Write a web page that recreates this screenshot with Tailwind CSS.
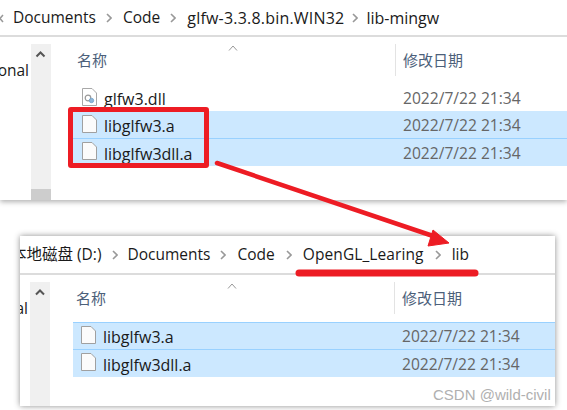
<!DOCTYPE html>
<html lang="en">
<head>
<meta charset="UTF-8">
<title>lib-mingw</title>
<script src="https://cdn.jsdelivr.net/npm/@tailwindcss/browser@4"></script>
</head>
<body class="bg-white overflow-hidden font-['Open_Sans','Noto_Sans_CJK_SC',sans-serif]">
<div class="relative w-[567px] h-[410px] overflow-hidden">

  <!-- top explorer window -->
  <section class="h-[200px] bg-white shadow-[0_2px_5px_rgba(0,0,0,0.3)] overflow-hidden">
    <div class="h-[37px] border-b-2 border-[#dcdcdc] flex items-center text-[15.5px] text-[#1a1a1a] pt-[1px] whitespace-nowrap">
      <svg class="w-[5px] h-[9px] ml-[-1px] mr-[9px]" viewBox="0 0 5 9"><path d="M4 1 1 4.500 4 8" fill="none" stroke="#999" stroke-width="1.500"/></svg>
      <span>Documents</span>
      <svg class="w-[6px] h-[10px] ml-[10px] mr-[11px]" viewBox="0 0 6 10"><path d="M1 1l4 4-4 4" fill="none" stroke="#999" stroke-width="1.600"/></svg>
      <span>Code</span>
      <svg class="w-[6px] h-[10px] ml-[10px] mr-[11px]" viewBox="0 0 6 10"><path d="M1 1l4 4-4 4" fill="none" stroke="#999" stroke-width="1.600"/></svg>
      <span class="text-[16px] tracking-[0.2px]">glfw-3.3.8.bin.WIN32</span>
      <svg class="w-[6px] h-[10px] mx-[8px]" viewBox="0 0 6 10"><path d="M1 1l4 4-4 4" fill="none" stroke="#999" stroke-width="1.600"/></svg>
      <span class="text-[16px]">lib-mingw</span>
    </div>
    <div class="flex h-[163px] pt-[7px]">
      <div class="w-[31px] shrink-0 text-[15.5px] text-[#1a1a1a] pt-[15px] overflow-hidden whitespace-nowrap flex justify-end pr-[2px]"><span>onal</span></div>
      <div class="w-[20px] shrink-0 h-[156px] bg-[#f0f0f0] flex flex-col justify-between">
        <svg class="w-[19px] h-[20px]" viewBox="0 0 19 20"><path d="M5.500 12.500 9.500 8.500l4 4" fill="none" stroke="#555" stroke-width="2"/></svg>
        <div class="h-[11px] bg-[#cdcdcd]"></div>
      </div>
      <div class="flex-1 pl-[22px] min-w-0">
        <div class="relative h-[41px] flex text-[15px] text-[#4c607a]">
          <svg class="absolute left-[155px] top-[1px] w-[10px] h-[6px]" viewBox="0 0 10 6"><path d="M1 5.500 5 1l4 4.500" fill="none" stroke="#999" stroke-width="1"/></svg>
          <span class="w-[322px] pl-[4px] pt-[5px]">名称</span>
          <div class="w-[8px] h-[32px] border-l border-[#e3e3e3]"></div>
          <span class="pt-[5px]">修改日期</span>
        </div>
        <div class="h-[26px] pl-[31px] pt-[2px] flex items-center text-[16px] text-[#1a1a1a] relative">
          <svg class="absolute left-[9px] top-[3px] w-[15px] h-[18px]" viewBox="0 0 15 18"><path d="M.5.500h9.500l4.500 4.500v12.500h-14z" fill="#fff" stroke="#a8a8a8"/><circle cx="6" cy="10" r="2.800" fill="none" stroke="#999" stroke-width="1.200"/><circle cx="9.500" cy="12.500" r="2.200" fill="#8fb8da" stroke="#6f9fc8" stroke-width=".8"/></svg>
          <span class="w-[299px]">glfw3.dll</span><span class="text-[#666] text-[15.6px]">2022/7/22 21:34</span>
        </div>
        <div class="h-[28px] pl-[31px] pt-[2px] flex items-center text-[16px] text-[#1a1a1a] relative bg-[#cce8ff] border-b border-[#99d1ff]">
          <svg class="absolute left-[9px] top-[4px] w-[15px] h-[18px]" viewBox="0 0 15 18"><path d="M.5.500h9.500l4.500 4.500v12.500h-14z" fill="#fbfbfb" stroke="#a0a0a0"/></svg>
          <span class="w-[299px]">libglfw3.a</span><span class="text-[#666] text-[15.6px]">2022/7/22 21:34</span>
        </div>
        <div class="h-[27px] pl-[31px] pt-[2px] flex items-center text-[16px] text-[#1a1a1a] relative bg-[#cce8ff]">
          <svg class="absolute left-[9px] top-[3px] w-[15px] h-[18px]" viewBox="0 0 15 18"><path d="M.5.500h9.500l4.500 4.500v12.500h-14z" fill="#fbfbfb" stroke="#a0a0a0"/></svg>
          <span class="w-[299px]">libglfw3dll.a</span><span class="text-[#666] text-[15.6px]">2022/7/22 21:34</span>
        </div>
      </div>
    </div>
  </section>

  <!-- bottom explorer window -->
  <section class="ml-[20px] mt-[36px] w-[535px] h-[170px] bg-white shadow-[0_0_6px_rgba(0,0,0,0.45)] overflow-hidden relative">
    <div class="h-[39px] border-b-2 border-[#dcdcdc] flex items-center text-[15.5px] text-[#1a1a1a] pt-[1px] whitespace-nowrap">
      <span class="ml-[-9px]">本地磁盘 (D:)</span>
      <svg class="w-[6px] h-[10px] mx-[10px]" viewBox="0 0 6 10"><path d="M1 1l4 4-4 4" fill="none" stroke="#999" stroke-width="1.600"/></svg>
      <span>Documents</span>
      <svg class="w-[6px] h-[10px] ml-[10px] mr-[11px]" viewBox="0 0 6 10"><path d="M1 1l4 4-4 4" fill="none" stroke="#999" stroke-width="1.600"/></svg>
      <span>Code</span>
      <svg class="w-[6px] h-[10px] mx-[11px]" viewBox="0 0 6 10"><path d="M1 1l4 4-4 4" fill="none" stroke="#999" stroke-width="1.600"/></svg>
      <span class="tracking-[0.1px]">OpenGL_Learing</span>
      <svg class="w-[6px] h-[10px] mx-[11px]" viewBox="0 0 6 10"><path d="M1 1l4 4-4 4" fill="none" stroke="#999" stroke-width="1.600"/></svg>
      <span>lib</span>
    </div>
    <div class="flex h-[131px] pt-[7px]">
      <div class="w-[10px] shrink-0 text-[15.5px] text-[#1a1a1a] pt-[15px] overflow-hidden whitespace-nowrap flex justify-end pr-[2px]"><span>al</span></div>
      <div class="w-[20px] shrink-0 bg-[#f0f0f0]">
        <svg class="w-[20px] h-[20px]" viewBox="0 0 20 20"><path d="M6 12.500 10 8.500l4 4" fill="none" stroke="#555" stroke-width="2"/></svg>
      </div>
      <div class="flex-1 pl-[23px] min-w-0">
        <div class="relative h-[40px] flex text-[15px] text-[#4c607a]">
          <svg class="absolute left-[154px] top-[1px] w-[10px] h-[6px]" viewBox="0 0 10 6"><path d="M1 5.500 5 1l4 4.500" fill="none" stroke="#999" stroke-width="1"/></svg>
          <span class="w-[321px] pl-[3px] pt-[5px]">名称</span>
          <div class="w-[8px] h-[32px] border-l border-[#e3e3e3]"></div>
          <span class="pt-[5px]">修改日期</span>
        </div>
        <div class="h-[28px] pl-[30px] pt-[2px] flex items-center text-[16px] text-[#1a1a1a] relative bg-[#cce8ff] border-y border-[#99d1ff]">
          <svg class="absolute left-[8px] top-[3px] w-[15px] h-[18px]" viewBox="0 0 15 18"><path d="M.5.500h9.500l4.500 4.500v12.500h-14z" fill="#fbfbfb" stroke="#a0a0a0"/></svg>
          <span class="w-[299px]">libglfw3.a</span><span class="text-[#666] text-[15.6px]">2022/7/22 21:34</span>
        </div>
        <div class="h-[27px] pl-[30px] pt-[2px] flex items-center text-[16px] text-[#1a1a1a] relative bg-[#cce8ff]">
          <svg class="absolute left-[8px] top-[3px] w-[15px] h-[18px]" viewBox="0 0 15 18"><path d="M.5.500h9.500l4.500 4.500v12.500h-14z" fill="#fbfbfb" stroke="#a0a0a0"/></svg>
          <span class="w-[299px]">libglfw3dll.a</span><span class="text-[#666] text-[15.6px]">2022/7/22 21:34</span>
        </div>
      </div>
    </div>
  </section>

  <!-- red annotations -->
  <div class="absolute left-[68px] top-[107px] w-[141px] h-[61px] border-[5px] border-[#ed1c24] rounded-[3px]"></div>
  <svg class="absolute left-0 top-0 w-[567px] h-[410px] pointer-events-none" viewBox="0 0 567 410">
    <path d="M217 163 436 237" stroke="#ed1c24" stroke-width="4.500" stroke-linecap="round"/>
    <path d="M449 243 433 230 428 246z" fill="#ed1c24" stroke="#ed1c24" stroke-linejoin="round"/>
    <path d="M299 273H475" stroke="#ed1c24" stroke-width="7" stroke-linecap="round"/>
  </svg>

  <span class="absolute left-[433px] top-[384px] text-[15px] text-[#b0b0b0] font-['Liberation_Sans',sans-serif]">CSDN @wild-civil</span>
</div>
</body>
</html>
